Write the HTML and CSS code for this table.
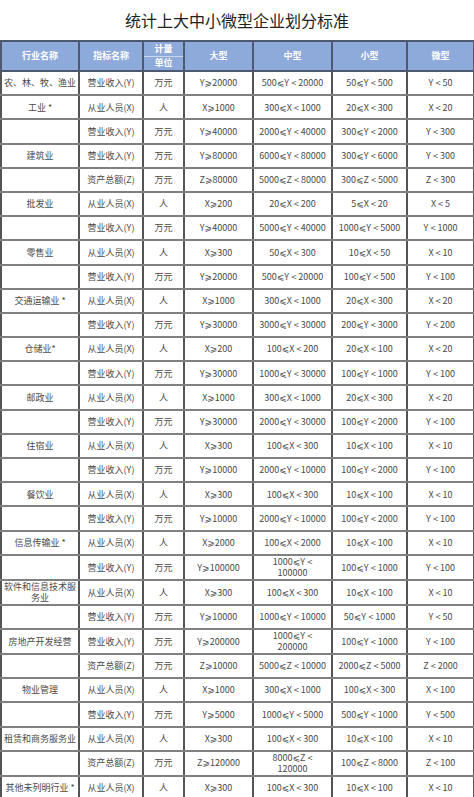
FILE: index.html
```html
<!DOCTYPE html>
<html lang="zh-CN">
<head>
<meta charset="utf-8">
<title>统计上大中小微型企业划分标准</title>
<link rel="stylesheet" href="styles.css">
</head>
<body>
<h1 class="title">统计上大中小微型企业划分标准</h1>
<table class="std">
<colgroup><col class="c1"><col class="c2"><col class="c3"><col class="c4"><col class="c5"><col class="c6"><col class="c7"></colgroup>
<thead>
<tr class="h1"><th rowspan="2">行业名称</th><th rowspan="2">指标名称</th><th class="unit-top">计量</th><th rowspan="2">大型</th><th rowspan="2">中型</th><th rowspan="2">小型</th><th rowspan="2">微型</th></tr>
<tr class="h2"><th class="unit-bottom">单位</th></tr>
</thead>
<tbody>
<tr><td>农、林、牧、渔业</td><td>营业收入(Y)</td><td>万元</td><td>Y⩾20000</td><td>500⩽Y &lt; 20000</td><td>50⩽Y &lt; 500</td><td>Y &lt; 50</td></tr>
<tr><td>工业 *</td><td>从业人员(X)</td><td>人</td><td>X⩾1000</td><td>300⩽X &lt; 1000</td><td>20⩽X &lt; 300</td><td>X &lt; 20</td></tr>
<tr><td></td><td>营业收入(Y)</td><td>万元</td><td>Y⩾40000</td><td>2000⩽Y &lt; 40000</td><td>300⩽Y &lt; 2000</td><td>Y &lt; 300</td></tr>
<tr><td>建筑业</td><td>营业收入(Y)</td><td>万元</td><td>Y⩾80000</td><td>6000⩽Y &lt; 80000</td><td>300⩽Y &lt; 6000</td><td>Y &lt; 300</td></tr>
<tr><td></td><td>资产总额(Z)</td><td>万元</td><td>Z⩾80000</td><td>5000⩽Z &lt; 80000</td><td>300⩽Z &lt; 5000</td><td>Z &lt; 300</td></tr>
<tr><td>批发业</td><td>从业人员(X)</td><td>人</td><td>X⩾200</td><td>20⩽X &lt; 200</td><td>5⩽X &lt; 20</td><td>X &lt; 5</td></tr>
<tr><td></td><td>营业收入(Y)</td><td>万元</td><td>Y⩾40000</td><td>5000⩽Y &lt; 40000</td><td>1000⩽Y &lt; 5000</td><td>Y &lt; 1000</td></tr>
<tr><td>零售业</td><td>从业人员(X)</td><td>人</td><td>X⩾300</td><td>50⩽X &lt; 300</td><td>10⩽X &lt; 50</td><td>X &lt; 10</td></tr>
<tr><td></td><td>营业收入(Y)</td><td>万元</td><td>Y⩾20000</td><td>500⩽Y &lt; 20000</td><td>100⩽Y &lt; 500</td><td>Y &lt; 100</td></tr>
<tr><td>交通运输业 *</td><td>从业人员(X)</td><td>人</td><td>X⩾1000</td><td>300⩽X &lt; 1000</td><td>20⩽X &lt; 300</td><td>X &lt; 20</td></tr>
<tr><td></td><td>营业收入(Y)</td><td>万元</td><td>Y⩾30000</td><td>3000⩽Y &lt; 30000</td><td>200⩽Y &lt; 3000</td><td>Y &lt; 200</td></tr>
<tr><td>仓储业*</td><td>从业人员(X)</td><td>人</td><td>X⩾200</td><td>100⩽X &lt; 200</td><td>20⩽X &lt; 100</td><td>X &lt; 20</td></tr>
<tr><td></td><td>营业收入(Y)</td><td>万元</td><td>Y⩾30000</td><td>1000⩽Y &lt; 30000</td><td>100⩽Y &lt; 1000</td><td>Y &lt; 100</td></tr>
<tr><td>邮政业</td><td>从业人员(X)</td><td>人</td><td>X⩾1000</td><td>300⩽X &lt; 1000</td><td>20⩽X &lt; 300</td><td>X &lt; 20</td></tr>
<tr><td></td><td>营业收入(Y)</td><td>万元</td><td>Y⩾30000</td><td>2000⩽Y &lt; 30000</td><td>100⩽Y &lt; 2000</td><td>Y &lt; 100</td></tr>
<tr><td>住宿业</td><td>从业人员(X)</td><td>人</td><td>X⩾300</td><td>100⩽X &lt; 300</td><td>10⩽X &lt; 100</td><td>X &lt; 10</td></tr>
<tr><td></td><td>营业收入(Y)</td><td>万元</td><td>Y⩾10000</td><td>2000⩽Y &lt; 10000</td><td>100⩽Y &lt; 2000</td><td>Y &lt; 100</td></tr>
<tr><td>餐饮业</td><td>从业人员(X)</td><td>人</td><td>X⩾300</td><td>100⩽X &lt; 300</td><td>10⩽X &lt; 100</td><td>X &lt; 10</td></tr>
<tr><td></td><td>营业收入(Y)</td><td>万元</td><td>Y⩾10000</td><td>2000⩽Y &lt; 10000</td><td>100⩽Y &lt; 2000</td><td>Y &lt; 100</td></tr>
<tr><td>信息传输业 *</td><td>从业人员(X)</td><td>人</td><td>X⩾2000</td><td>100⩽X &lt; 2000</td><td>10⩽X &lt; 100</td><td>X &lt; 10</td></tr>
<tr><td></td><td>营业收入(Y)</td><td>万元</td><td>Y⩾100000</td><td>1000⩽Y &lt;<br>100000</td><td>100⩽Y &lt; 1000</td><td>Y &lt; 100</td></tr>
<tr><td>软件和信息技术服务业</td><td>从业人员(X)</td><td>人</td><td>X⩾300</td><td>100⩽X &lt; 300</td><td>10⩽X &lt; 100</td><td>X &lt; 10</td></tr>
<tr><td></td><td>营业收入(Y)</td><td>万元</td><td>Y⩾10000</td><td>1000⩽Y &lt; 10000</td><td>50⩽Y &lt; 1000</td><td>Y &lt; 50</td></tr>
<tr><td>房地产开发经营</td><td>营业收入(Y)</td><td>万元</td><td>Y⩾200000</td><td>1000⩽Y &lt;<br>200000</td><td>100⩽Y &lt; 1000</td><td>Y &lt; 100</td></tr>
<tr><td></td><td>资产总额(Z)</td><td>万元</td><td>Z⩾10000</td><td>5000⩽Z &lt; 10000</td><td>2000⩽Z &lt; 5000</td><td>Z &lt; 2000</td></tr>
<tr><td>物业管理</td><td>从业人员(X)</td><td>人</td><td>X⩾1000</td><td>300⩽X &lt; 1000</td><td>100⩽X &lt; 300</td><td>X &lt; 100</td></tr>
<tr><td></td><td>营业收入(Y)</td><td>万元</td><td>Y⩾5000</td><td>1000⩽Y &lt; 5000</td><td>500⩽Y &lt; 1000</td><td>Y &lt; 500</td></tr>
<tr><td>租赁和商务服务业</td><td>从业人员(X)</td><td>人</td><td>X⩾300</td><td>100⩽X &lt; 300</td><td>10⩽X &lt; 100</td><td>X &lt; 10</td></tr>
<tr><td></td><td>资产总额(Z)</td><td>万元</td><td>Z⩾120000</td><td>8000⩽Z &lt;<br>120000</td><td>100⩽Z &lt; 8000</td><td>Z &lt; 100</td></tr>
<tr><td>其他未列明行业 *</td><td>从业人员(X)</td><td>人</td><td>X⩾300</td><td>100⩽X &lt; 300</td><td>10⩽X &lt; 100</td><td>X &lt; 10</td></tr>
</tbody>
</table>
</body>
</html>
```
FILE: styles.css
```css
html, body {
  margin: 0;
  padding: 0;
  background: #ffffff;
}
body {
  width: 474px;
  font-family: "Noto Sans CJK SC", "DejaVu Sans", sans-serif;
}
.title {
  margin: 0;
  height: 40px;
  line-height: 40px;
  text-align: center;
  font-size: 16px;
  font-weight: normal;
  color: #222222;
}
.std {
  border-collapse: collapse;
  table-layout: fixed;
  width: 473px;
}
.c1 { width: 78px; }
.c2 { width: 64px; }
.c3 { width: 41px; }
.c4 { width: 69px; }
.c5 { width: 79px; }
.c6 { width: 75px; }
.c7 { width: 67px; }
.std th {
  background: #8eaadb;
  color: #ffffff;
  font-size: 9px;
  font-weight: bold;
  padding: 0;
  line-height: 12px;
  border: 2px solid #4d5a72;
}
.std .h1, .std .h2 { height: 15px; }
.std th.unit-top { border-bottom: 1px solid #c9d6ee; }
.std th.unit-bottom { border-top: 1px solid #c9d6ee; }
.std tbody tr { height: 24.2px; }
.std td {
  padding: 0 1px;
  font-size: 9px;
  line-height: 11.5px;
  color: #4a4a4a;
  text-align: center;
  border-top: 2px solid #808080;
  border-bottom: 2px solid #808080;
  border-left: 2px solid #555555;
  border-right: 2px solid #555555;
}
```
